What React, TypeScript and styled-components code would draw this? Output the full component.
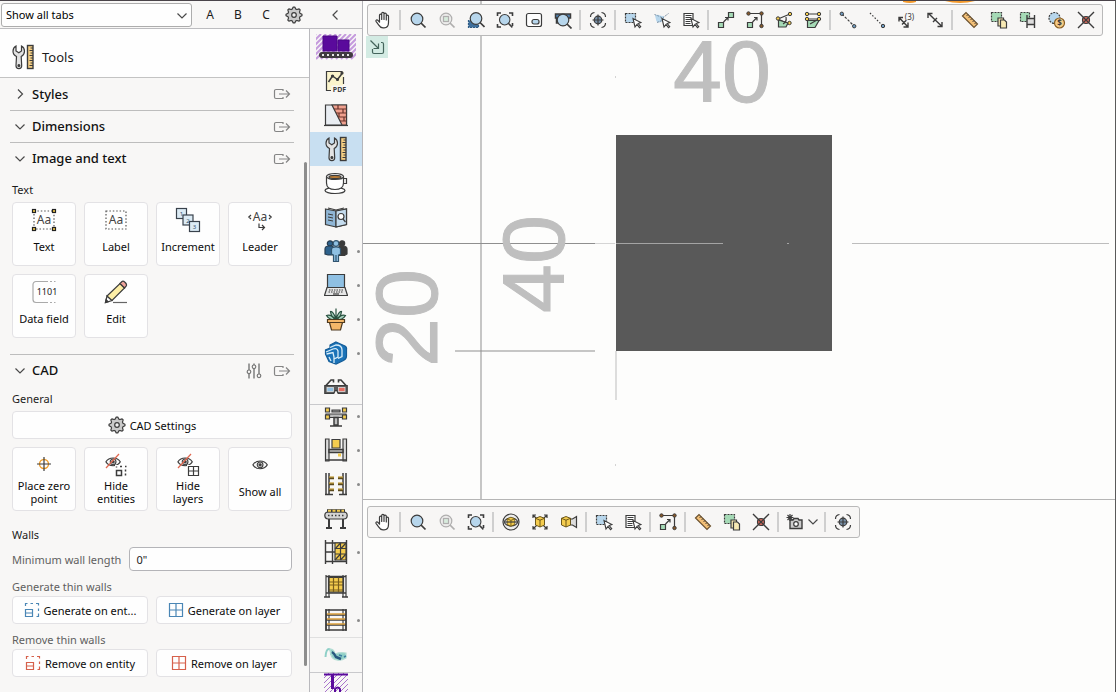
import React from "react";
import styled, { createGlobalStyle, css } from "styled-components";

const ink = "#3c3c3c";
const blue = "#b7d6ec";
const green = "#a5dab6";
const gold = "#f4cc4e";

const GlobalStyle = createGlobalStyle`
  *, *::before, *::after { box-sizing: border-box; }
  body {
    margin: 0;
    background: #fdfdfc;
    color: #1c1c1c;
    font-family: "Noto Sans", "Open Sans", sans-serif;
    font-size: 11px;
    line-height: 13px;
  }
  button, input, select { font: inherit; color: inherit; }
  h1, h2, h3, p { margin: 0; font: inherit; }
`;

/* ---------- layout ---------- */

const Shell = styled.div`
  display: flex;
  height: 100vh;
  overflow: hidden;
  border-top: 1px solid #4a444a;
  border-right: 1px solid #5a5a5a;
`;

const Sidebar = styled.aside`
  flex: none;
  display: flex;
  flex-direction: column;
  background: #f8f7f6;
  border-right: 1px solid #b5b5b9;
`;

const TopBar = styled.header`
  flex: none;
  display: flex;
  align-items: center;
  height: 28px;
  padding-left: 1px;
  border-bottom: 1px solid #bdbdc0;
`;

const TabSelect = styled.div`
  position: relative;
  width: 191px;
  margin-right: 4px;
  select {
    display: block;
    width: 100%;
    height: 24px;
    padding: 0 20px 0 4px;
    border: 1px solid #adadad;
    border-radius: 3px;
    background: #fefefe;
    color: #000;
    appearance: none;
  }
  svg {
    position: absolute;
    right: 4px;
    top: 7px;
    pointer-events: none;
  }
`;

const BarButton = styled.button`
  width: 28px;
  height: 24px;
  padding: 0;
  border: 0;
  background: none;
  font-size: 12px;
  display: grid;
  place-items: center;
`;

const CollapseButton = styled(BarButton)`
  flex: 1;
`;

const SideBody = styled.div`
  flex: 1;
  min-height: 0;
  display: flex;
`;

const Panel = styled.section`
  width: 310px;
  display: flex;
  flex-direction: column;
  border-right: 1px solid #b9b9bd;
`;

const PanelTitle = styled.h1`
  flex: none;
  display: flex;
  align-items: center;
  gap: 8px;
  height: 49px;
  padding: 8px 12px 0;
  font-size: 13px;
  background: #fefefe;
  border-bottom: 1px solid #c3c3c3;
`;

const PanelScroll = styled.div`
  flex: 1;
  min-height: 0;
  display: flex;
  overflow: hidden;
`;

const Sections = styled.div`
  flex: 1;
  min-width: 0;
  padding: 0 10px;
`;

const Thumb = styled.div`
  flex: none;
  width: 3px;
  height: 504px;
  margin: 84px 2px 0 0;
  border-radius: 2px;
  background: #8d8d8d;
`;

const SectionHead = styled.button`
  display: flex;
  align-items: center;
  gap: 6px;
  width: 100%;
  height: 31px;
  padding: 0 3px 0 4px;
  border: 0;
  background: none;
  color: #111;
  font-size: 13px;
  font-weight: 500;
  text-align: left;
  span { flex: 1; }
  svg + svg { margin-left: 4px; }
`;

const Section = styled.section`
  &:first-child ${SectionHead} { height: 32px; }
  & + & { border-top: 1px solid #bdbdbd; }
`;

const SectionBody = styled.div<{ $top: number; $end: number }>`
  padding: ${(p) => p.$top}px 2px ${(p) => p.$end}px;
`;

const GroupLabel = styled.h3`
  height: 19px;
`;

const Hint = styled.p`
  height: 16px;
  color: #5f5f5f;
`;

const Tiles = styled.div`
  display: grid;
  grid-template-columns: repeat(4, minmax(0, 1fr));
  gap: 8px;
`;

const plate = css`
  border: 1px solid #e3e2e5;
  border-radius: 4px;
  background: #fefefe;
  color: #0c0c0c;
  padding: 0;
  white-space: nowrap;
`;

const Tile = styled.button<{ $tall?: boolean }>`
  ${plate}
  height: 64px;
  display: flex;
  flex-direction: column;
  align-items: center;
  justify-content: ${(p) => (p.$tall ? "flex-end" : "flex-start")};
  padding: ${(p) => (p.$tall ? "0 0 5px" : "4px 0 0")};
  gap: ${(p) => (p.$tall ? "0" : "7px")};
  svg { flex: none; }
`;

const Wide = styled.button`
  ${plate}
  display: flex;
  align-items: center;
  justify-content: center;
  gap: 4px;
  width: 100%;
  height: 28px;
`;

const Pair = styled.div`
  display: grid;
  grid-template-columns: repeat(2, minmax(0, 1fr));
  gap: 8px;
  margin-bottom: 9px;
`;

const Stack = styled.div`
  display: grid;
  gap: 8px;
  margin-bottom: 17px;
`;

const Field = styled.label`
  display: flex;
  align-items: center;
  gap: 8px;
  margin-bottom: 9px;
  color: #5f5f5f;
  white-space: nowrap;
  input {
    flex: 1;
    min-width: 0;
    height: 24px;
    padding: 0 6px;
    color: #222;
    border: 1px solid #b4b4b8;
    border-radius: 4px;
    background: #fefefe;
  }
`;

/* ---------- rail ---------- */

const Rail = styled.nav`
  width: 52px;
  display: flex;
  flex-direction: column;
  padding-top: 1px;
`;

const RailGroup = styled.div<{ $scrolled?: boolean }>`
  flex: none;
  overflow: hidden;
  border-bottom: 1px solid #c9c9cc;
  ${(p) =>
    p.$scrolled &&
    css`
      border-bottom-color: #e0e0e0;
      > :first-child { margin-top: -6px; }
    `}
`;

const RailButton = styled.button<{ $active?: boolean }>`
  display: flex;
  align-items: center;
  justify-content: center;
  position: relative;
  width: 100%;
  height: 34px;
  padding: 0;
  border: 0;
  background: ${(p) => (p.$active ? "#c8dff1" : "none")};
`;

const More = styled.i`
  position: absolute;
  right: 2px;
  top: 16px;
  width: 3px;
  height: 3px;
  border-radius: 2px;
  background: #8a8a8a;
`;

/* ---------- viewer ---------- */

const Viewer = styled.main`
  flex: 1;
  min-width: 0;
  display: flex;
  flex-direction: column;
`;

const View = styled.section`
  flex: 1;
  min-height: 0;
  position: relative;
  overflow: hidden;
  display: flex;
  flex-direction: column;
  align-items: flex-start;
  padding: 6px 4px 0;
  &:first-child {
    flex: 0 0 72%;
    padding-top: 3px;
  }
  & + & { border-top: 1px solid #b5b5b5; }
`;

const Canvas = styled.svg`
  position: absolute;
  left: 0;
  top: 0;
  width: 100%;
  height: 100%;
`;

const Toolbar = styled.div`
  position: relative;
  flex: none;
  display: flex;
  align-items: center;
  height: 32px;
  padding-right: 2px;
  border: 1px solid #b9b9b9;
  border-radius: 3px;
  background: #f7f6f5;
`;

const ToolButton = styled.button<{ $wide?: boolean }>`
  width: ${(p) => (p.$wide ? 41 : 29)}px;
  height: 28px;
  padding: 0;
  border: 0;
  background: none;
  display: flex;
  gap: 4px;
  align-items: center;
  justify-content: center;
`;

const Divider = styled.span`
  width: 2px;
  height: 20px;
  margin: 0 2px;
  background: #cfcfcf;
`;

const InsertButton = styled.button`
  position: relative;
  width: 22px;
  height: 22px;
  margin-left: -1px;
  padding: 0;
  border: 0;
  background: #d3ebe3;
  display: grid;
  place-items: center;
`;

/* ---------- icons ---------- */

type Art = React.ReactNode;

const Svg = ({ w = 18, h = w, children }: { w?: number; h?: number; children: Art }) => (
  <svg width={w} height={h} viewBox={`0 0 ${w} ${h}`} fill="none" stroke={ink} strokeWidth="1.2" aria-hidden="true">
    {children}
  </svg>
);

const gearTeeth = Array.from({ length: 32 }, (_, i) => {
  const a = ((i - 0.5) * Math.PI) / 16;
  const r = i % 4 < 2 ? 8 : 6.2;
  return `${(9 + r * Math.cos(a)).toFixed(2)},${(9 + r * Math.sin(a)).toFixed(2)}`;
}).join(" ");

const Gear = () => (
  <Svg>
    <polygon points={gearTeeth} fill="#c9c9c9" strokeLinejoin="round" />
    <circle cx="9" cy="9" r="2.3" fill="#efefef" />
  </Svg>
);

const Chevron = ({ dir }: { dir: "down" | "right" | "left" }) => (
  <Svg w={12}>
    <path
      stroke="#4a4a4a"
      d={dir === "down" ? "M1.5 3.5 6 8l4.5-4.5" : dir === "right" ? "M4 1.5 8.5 6 4 10.5" : "M8.5 1.5 4 6l4.5 4.5"}
    />
  </Svg>
);

const PopOut = () => (
  <Svg w={18} h={12}>
    <g stroke="#858585">
      <path d="M10 3V1.5H3A1.5 1.5 0 0 0 1.500 3v6A1.5 1.5 0 0 0 3 10.5h7V9" />
      <path d="M6 6h10.500M13 2.500 16.500 6 13 9.500" />
    </g>
  </Svg>
);

const Sliders = () => (
  <Svg w={18}>
    <g stroke="#777">
      <path d="M4 1.500V8M4 11.500v5M9 1.500V3M9 6.500v10M14 1.500V12" strokeWidth="1.400" />
      <circle cx="4" cy="9.800" r="1.800" />
      <circle cx="9" cy="4.800" r="1.800" />
      <circle cx="14" cy="13.800" r="1.800" />
    </g>
  </Svg>
);

const WrenchRuler = () => (
  <Svg w={22} h={26}>
    <path
      fill="#e3e3e3"
      d="M4.500 12.500C2.500 11.500 1 9.500 1 7.200 1 5 2.200 3 4 2v5l2.800 1.800L9.500 7V2c1.800 1 3 3 3 5.200 0 2.300-1.500 4.300-3.300 5.300l.5 9.200a2.800 2.800 0 0 1-5.700 0z"
    />
    <circle cx="6.900" cy="21.500" r=".9" fill={ink} />
    <rect x="15.500" y="1.500" width="5.500" height="23" fill="#f6cf83" strokeWidth="1.400" />
    <path d="M18.500 4H21M17.500 6.500H21M18.500 9H21M17.500 11.500H21M18.500 14H21M17.500 16.500H21M18.500 19H21M17.500 21.500H21" strokeWidth="1" />
  </Svg>
);

const AaBox = ({ handles }: { handles?: boolean }) => (
  <Svg w={26}>
    <rect x="3" y="4" width="20" height="18" strokeDasharray="1.500 1.900" stroke="#555" />
    <text x="13" y="17" textAnchor="middle" fontSize="12" fill="#444" stroke="none">Aa</text>
    {handles &&
      [[1.5, 2.5], [21.5, 2.5], [1.5, 20.5], [21.5, 20.5]].map(([x, y]) => (
        <rect key={`${x}-${y}`} x={x} y={y} width="3" height="3" fill={gold} stroke="#222" />
      ))}
  </Svg>
);

const Increment = () => (
  <Svg w={26}>
    {[0, 1, 2].map((i) => (
      <g key={i}>
        <rect x={1.5 + i * 6.5} y={1.5 + i * 6.5} width="10" height="10" fill="#dcebf5" stroke="#39424c" />
        <text x={6.5 + i * 6.5} y={9 + i * 6.5} textAnchor="middle" fontSize="6" fill="#33506d" stroke="none">{i + 1}</text>
      </g>
    ))}
  </Svg>
);

const Leader = () => (
  <Svg w={26}>
    <text x="13" y="14" textAnchor="middle" fontSize="12" fill="#444" stroke="none">Aa</text>
    <path d="M4 8 1.800 10 4 12M22 8 24.200 10 22 12" />
    <path d="M12 16.500v4h5M15 18l2.500 2.500L15 23" />
  </Svg>
);

const DataField = () => (
  <Svg w={28} h={26}>
    <path stroke="#aaa" d="M18 2.500H6a3 3 0 0 0-3 3v15a3 3 0 0 0 3 3h12M20 2.500h2M24 2.500h1.500M20 23.500h2M24 23.500h1.500" />
    <text x="17" y="16" textAnchor="middle" fontSize="9" fill="#222" stroke="none">1101</text>
  </Svg>
);

const Pencil = () => (
  <Svg w={26}>
    <path d="M10 23.500h14" stroke="#666" />
    <path d="M2.500 23.500 4 17 9 21.500z" fill="#fff" />
    <path d="M4 17 17 4.500 21.500 9 9 21.500z" fill="#fdeea6" />
    <path d="m17 4.500 2-2c1.500-1.200 5.500 2.500 4.300 4.300L21.500 9z" fill="#f0a39a" />
    <path d="m2.500 23.500.6-2.800 2 2z" fill={ink} />
  </Svg>
);

const EyeShape = () => (
  <>
    <path d="M1 6.500C4.500.8 13.500.8 17 6.500 13.500 12.200 4.500 12.200 1 6.500z" fill="#fafafa" />
    <circle cx="9" cy="6.500" r="3.200" fill="#ddd" />
    <circle cx="9" cy="6.500" r="1.200" fill={ink} />
  </>
);

const Eye = () => (
  <Svg w={26}>
    <g transform="translate(5 7) scale(.9)"><EyeShape /></g>
  </Svg>
);

const HiddenEye = ({ dashed }: { dashed?: boolean }) => (
  <Svg w={26}>
    <g transform="translate(2 3) scale(.9)"><EyeShape /></g>
    <rect x="12" y="12" width="12" height="12" fill="#fefefe" stroke="none" />
    {dashed ? (
      <path d="M13.500 17.500h5v5h-5zM13.500 13.500v1M17 13.500h2M22 13.500h1.500M22.500 16.500v2M22.500 20.500v2" strokeWidth="1.500" />
    ) : (
      <path d="M13.500 13.500h10v9h-10zM18.500 13.500v9M13.500 18h10" />
    )}
    <path d="M3 15 16 1" stroke="#e0674f" />
  </Svg>
);

const ZeroPoint = () => (
  <Svg w={18} h={26}>
    <circle cx="9" cy="11" r="4.500" stroke="#f0a030" strokeWidth="1.400" />
    <path d="M2 11h14M9 4v14" />
  </Svg>
);

const WallGrid = ({ color, dashed }: { color: string; dashed?: boolean }) => (
  <Svg w={16}>
    <g stroke={color}>
      {dashed ? (
        <path d="M1.500 7.500h7v7h-7zM1.500 11h7M1.500 4v-2.500h2M6.500 1.500h2.500M12 1.500h2.500v2M14.500 6.500v2.500M14.500 11.500v3h-2" />
      ) : (
        <path d="M1.500 1.500h13v13h-13zM8 1.500v13M1.500 8h13" />
      )}
    </g>
  </Svg>
);

const cursor = <path d="m9 7.500 2 8.500 2-2.500 2.500 3.200 1.200-1-2.500-3.200 2.800-1z" fill="#fff" strokeWidth="1.100" />;
const lens = (fill = blue) => (
  <>
    <circle cx="8" cy="8" r="5.800" fill={fill} />
    <path d="m12 12 4.500 4.500" strokeWidth="1.700" />
  </>
);
const corners = <path d="M1.500 5V2H5M13 2h3.500V5M1.500 13v3H5M16.500 12v3" strokeWidth="1.600" />;
const node = (x: number, y: number, fill = gold) => <circle cx={x} cy={y} r="1.700" fill={fill} strokeWidth="1" />;
const cube = (
  <g strokeWidth=".9" stroke="#5d4a10">
    <path d="m9 3.500 4.500 1.800v6.700L9 14l-4.500-2V5.300z" fill={gold} />
    <path d="M4.500 5.300 9 7.200l4.500-1.900M9 7.200V14" />
  </g>
);

const tools: Record<string, Art> = {
  Pan: (
    <path
      fill="#fff"
      strokeLinejoin="round"
      d="M5.500 11.200V4.300a1.100 1.100 0 0 1 2.200 0V8.500 2.500a1.100 1.100 0 0 1 2.300 0V8.500 3.300a1.100 1.100 0 0 1 2.300 0V9 5.200a1.100 1.100 0 0 1 2.200 0v6.300c0 3.200-1.600 5.300-4.400 5.300H9c-2 0-3.200-1-4.200-2.700L2 10.300c-.6-1.200 1-2 1.900-1z"
    />
  ),
  Zoom: lens(),
  "Zoom selection": <g opacity=".38">{lens("#ddd")}<rect x="5.500" y="5.500" width="5" height="5" fill={green} /></g>,
  "Zoom area": <><path d="M1.500 9v7.500h10v-3" fill="#3e6f9c" stroke="#2d5a84" strokeDasharray="2 1" /><g transform="translate(1 -.5)">{lens()}</g></>,
  "Zoom all": <>{corners}<g transform="translate(1.500 1.500) scale(.9)">{lens()}</g></>,
  "Overview map": <><rect x="1.500" y="2.500" width="15" height="13" rx="2" fill="#fff" /><rect x="7" y="8.500" width="7" height="4.500" rx="2" fill={blue} /></>,
  "Zoom window": <><path d="M1.500 3h15v4h-15zM2.500 7v5h3" fill="#4d7fae" strokeWidth="1.500" /><g transform="translate(1 1)">{lens()}</g></>,
  Center: <>
    <path d="M1.500 6q0-4 4-4.500M12.500 1.500q4 .5 4 4.500M1.500 12q0 4 4 4.500M12.500 16.500q4-.5 4-4.500" />
    <circle cx="9" cy="9" r="3.800" fill="#7890a8" /><path d="M9 3.500v11M3.500 9h11" />
  </>,
  Select: <><rect x="1.500" y="2.500" width="10" height="9" fill={blue} strokeDasharray="2 1" />{cursor}</>,
  "Select free": <>
    <path d="M2 4.500q3-1.500 5 0l4 1v4L7 11.500q-4 0-4-3z" fill={blue} stroke="none" />
    <path d="m1.500 3.500 4 1.500 4 2 6-4.500M4 11.500l5-2" strokeWidth=".9" stroke="#6f8598" strokeDasharray="2 1" />{cursor}
  </>,
  "Select list": <><path d="M2 2.500h9v12H2z" fill="#fff" /><path d="M3.500 4.500h6M3.500 6.500h6M3.500 8.500h6M3.500 10.500h5M3.500 12.500h5" strokeWidth="1.100" />{cursor}</>,
  "Move diagonal": <><path d="M1.500 11.500h5v5h-5zM11.500 1.500h5v5h-5z" fill={green} /><path d="m6.500 11 4-4M8 6.500h3v3" /></>,
  "Move corner": <>
    <path d="M1.500 11.500h5v5h-5z" fill={green} /><path d="m6.500 11 4-4M8 6.500h3v3M3 2.500h12.500V15" />
    {node(2.5, 2.5, "#8a5a2a")}{node(15.5, 2.5, "#8a5a2a")}{node(15.5, 15, "#8a5a2a")}
  </>,
  "Rotate shape": <>
    <path d="m3 8 12-5M3 8l11 5" /><path d="M3.500 9v7H11l2-4z" fill={green} /><path d="M8 13q4-2 3-7" />
    {node(3, 7.5)}{node(15, 3)}{node(14.5, 12)}
  </>,
  "Stretch shape": <>
    <path d="M3 3h12M3 8h12" /><path d="M3.500 9.500v7H11l4-7z" fill={green} /><path d="m6 13 7-4" />
    {node(3, 3)}{node(15, 3)}{node(3, 8)}{node(15, 8)}
  </>,
  "Line start": <><path d="m3 3 12 12" strokeDasharray="2.500 1.500" />{node(2.8, 2.8, "#6f9cc2")}{node(15.2, 15.2, "#6f9cc2")}</>,
  "Line end": <><path d="m2 2 13 13" strokeDasharray="1.500 1.800" />{node(15, 15, "#6f9cc2")}</>,
  "Dimension chain": <>
    <path d="m2.500 7 8 8.500M2 10.500V6.500h4M11 11.500V16H6.500M5 13.500l4-4" strokeWidth="1.400" />
    <text x="12.500" y="8.500" textAnchor="middle" fontSize="8" fill={ink} stroke="none">(3)</text>
  </>,
  Dimension: <path d="m2.500 2.500 13.500 13M2 7V2.500h4.500M16 11v4.500h-4.500M7 11l4-4" strokeWidth="1.400" />,
  Measure: <><path d="m1.500 5 3.500-3.500L16.500 13 13 16.500z" fill="#f3bf76" stroke="#6c5230" /><path d="m7 3.500-1.500 1.500M9 5.500 7.500 7M11 7.500 9.500 9M13 9.500 11.500 11M15 11.500 13.500 13" strokeWidth=".9" /></>,
  "Copy selection": <><path d="M1.500 1.500h10v9h-10z" fill={green} strokeDasharray="2 1" /><path d="M8 7h5.500v8H8z" fill="#f7e9b4" /><path d="M10.500 9h4l2 2v6h-6z" fill="#f7e9b4" /></>,
  "Save selection": <><path d="M1.500 1.500h9v9h-9z" fill={green} strokeDasharray="2 1" /><path d="M8 4v13M15.500 4v13M8 7.500h7.500v6H8z" fill="#ddd" strokeWidth="1.400" /></>,
  Price: <><circle cx="6.500" cy="7" r="5.500" fill={blue} strokeDasharray="2 1" /><circle cx="11.500" cy="12" r="5" fill="#f6cd88" stroke="#8a5e22" /><text x="11.500" y="15" textAnchor="middle" fontSize="8" fontWeight="700" fill={ink} stroke="none">$</text></>,
  "Delete point": <><path d="m1 1 16 16M17 1 1 17" strokeWidth="1.400" /><circle cx="9" cy="9" r="3.500" fill="#d86a5c" /><path d="m6.500 6.500 5 5M11.500 6.500l-5 5" /></>,
  Orbit: <><circle cx="9" cy="9" r="8" fill="#eee" /><ellipse cx="9" cy="9" rx="6.500" ry="4" fill="#fff" /><g transform="translate(1.200 1.200) scale(.86)">{cube}</g><path d="M3 9h12" /></>,
  "Fit model": <><path d="M2 5V2h3M13 2h3v3M2 13v3h3M16 13v3h-3M2 2l3.500 3.500M16 2l-3.500 3.500M2 16l3.500-3.500M16 16l-3.500-3.500" />{cube}</>,
  "Camera view": <><path d="M10 6h2.500L16.500 3.500v11l-4-2.500H10z" fill="#ddd" /><g transform="translate(-3 0)">{cube}</g></>,
};

const CameraIcon = () => (
  <Svg w={18}>
    <path d="M5 7h3l1-1.500h4L14 7h3v8.500H5z" fill="#ccc" strokeWidth="1.400" />
    <circle cx="11" cy="11" r="2.300" fill="#fff" />
    <path d="M5 1v7M1.500 4.500h7M2.500 2l5 5M7.500 2l-5 5" strokeWidth="1.200" />
  </Svg>
);

const shelfUprights = <path d="M2 1v22M5 1v22M19 1v22M22 1v22" strokeWidth="1.200" />;

const rail: Record<string, Art> = {
  PDF: <>
    <path d="M2.500 2.500h17v14h-12v5h-5z" fill="#fbf4cc" stroke="none" /><path d="M7 21.500H2.500v-19h16M19.500 8v7" />
    <path d="m4.500 13 4-6 5 3.500 5-6.500" strokeWidth="1.500" />
    <g fill={ink}><circle cx="8.500" cy="7" r="1" /><circle cx="13.500" cy="10.500" r="1" /><circle cx="18" cy="4" r="1" /></g>
    <text x="15.500" y="22.500" textAnchor="middle" fontSize="7" fontWeight="700" fill={ink} stroke="none">PDF</text>
  </>,
  Walls: <>
    <path d="M1.500 2h21v20h-21z" fill="#e9edf2" /><path d="M8 2h14.500v20H18z" fill="#f0a08e" />
    <path d="M10 6h12.500M12 10h10.500M14 14h8.500M16 18h6.500M14 2v4M19 6v4M15 10v4M20 14v4" stroke="#6b322a" /><path d="M0 22.500h24" />
  </>,
  Catering: <>
    <ellipse cx="11" cy="19.500" rx="10" ry="3" fill="#fff" /><path d="M2.500 5.500v6.500c0 4 3 6.500 8.500 6.500s8.500-2.500 8.500-6.500V5.500" fill="#fff" />
    <path d="M19.500 7.500h3v5h-3" /><ellipse cx="11" cy="5.500" rx="8.500" ry="3" fill="#fff" /><ellipse cx="11" cy="6" rx="6" ry="1.600" fill="#b77a35" />
  </>,
  Catalog: <>
    <path d="M1.500 4 12 6l10.500-2v15.500L12 22 1.500 19.500z" fill="#8fb6d6" /><path d="M12 6v16M4 3l8 2 8-2" /><path d="M4 9l5 1M4 12l5 1M4 15l5 1" strokeWidth="1" />
    <path d="M12 6l10.500-2v15.500L12 22z" fill="#c5dcee" /><circle cx="17" cy="11.500" r="3" fill="#fff" /><path d="m19 14 2.500 3" />
  </>,
  People: <>
    <g fill="#2e628c" stroke="#263c50"><circle cx="6" cy="4.500" r="2.700" /><path d="M1 15V10q0-3 4-3h4v9h-5z" /></g>
    <g fill="#3a3a3a"><circle cx="18" cy="4.500" r="2.700" /><path d="M15 7h4q4 0 4 3v5l-2.500 1.500H15z" /></g>
    <g fill="#8fc0e3" stroke="#31546f"><circle cx="12" cy="4.500" r="2.800" /><path d="M7.500 15v-4.500q0-2.500 4.500-2.500t4.500 2.500V15l-2 1v6.500h-5V16z" /><path d="M12 16v6" /></g>
  </>,
  Computer: <>
    <path d="M3.500 1.500h17v13h-17z" fill="#8fc0e3" /><path d="M3 14.500h18l2.500 8H.5z" fill="#e6e6e6" /><path d="M5 17h14M4.500 19h15" strokeDasharray="1.500 1" /><path d="M9 21h6" />
  </>,
  Plants: <>
    <path d="M12 13V1.500M12 12Q9 4 6.500 4.500 7 10 12 13 17 10 17.500 4.500 15 4 12 12M12 13Q7 7 2.500 8.500 5 13 12 13 19 13 21.500 8.500 17 7 12 13" fill="#a9d3c0" stroke="#28503f" />
    <path d="M3.500 12.500h17v3h-17zM5.500 15.500h13l-2 7.500h-9z" fill="#f3b769" stroke="#4f3a20" />
  </>,
  "3D models": <>
    <path d="M12 1 21 5q2 1 1.500 4v6q0 3-3 4.500L12 23l-7-2.500L1.500 13V9L6 7V4z" fill="#1b73b8" stroke="#145c97" />
    <path d="M2 11l7-3q4-1.500 5 2v6l-4 2M6 6.500l6-2.500q6 0 6 5v6.500L14 17.500M2.500 13 9 11.500 10 16v6M5 16l2 4" stroke="#d9edf8" strokeWidth="1.300" />
  </>,
  "3D glasses": <>
    <path d="M.8 10.500h22.400v8h-9l-1.500-3h-1.400l-1.500 3h-9z" fill="#5b5b5b" /><rect x="3" y="12.500" width="6.500" height="4" fill="#8fc0e3" stroke="#ddd" strokeWidth=".8" />
    <rect x="14.500" y="12.500" width="6.500" height="4" fill="#e86c60" stroke="#ddd" strokeWidth=".8" /><path d="M2 10.500 7 5h2.500v2.500M22 10.500 17 5h-2.500v2.500" strokeWidth="1.600" />
  </>,
  Workbench: <>
    <path d="M2 10h20v3.500H2z" fill="#bdbdbd" /><path d="M10 13.500h4V21h-4zM6 22h12" fill="#bdbdbd" strokeWidth="1.500" /><path d="M8 6h8v2H8z" fill="#999" />
    <g fill={gold}><path d="M1.500 4h4v4h-4zM18.500 4h4v4h-4zM1.500 11h4v4h-4zM18.500 11h4v4h-4z" /></g>
  </>,
  Racking: <>
    <path d="M1.500 1h3.500v22H1.500zM19 1h3.500v22H19z" fill="#ddd" /><path d="M5 11.500h14v3H5zM2 22h20" fill="#bbb" strokeWidth="1.500" /><path d="M8 1.500h8v8.500H8z" fill={gold} /><path d="M14 15.500h3v3h-3z" fill={gold} stroke="none" />
  </>,
  Cantilever: <>
    <path d="M2 1v21M5 1v21M19 1v21M22 1v21M1 22.500h8M15 22.500h8" strokeWidth="1.500" /><g stroke="#5b4a1d" strokeWidth="2.500"><path d="M5 6h5M5 12h5M5 18h5M14 6h5M14 12h5M14 18h5" /></g>
    <g stroke="#e0b64d"><path d="M5 5h5M5 11h5M5 17h5M14 5h5M14 11h5M14 17h5" /></g>
  </>,
  Conveyor: <>
    <path d="M5 12v10M19 12v10M2 22h6M16 22h6" strokeWidth="2" /><rect x=".8" y="6" width="22.400" height="7" rx="3.500" fill="#d5d5d5" /><path d="M4 9.500h16" strokeDasharray="1.500 2" strokeWidth="1.600" />
    <path d="M3 4.800h18" strokeWidth="3.200" /><path d="M4 4.800h16" stroke={gold} strokeDasharray="3 1.500" strokeWidth="2" />
  </>,
  "Pallet rack": <>
    <path d="M1.500 0v24M8.500 0v24M22.500 0v24M1.500 3h21M1.500 12h21M1.500 21.500h21" strokeWidth="1.400" /><path d="M11 3h11v17H11z" fill={gold} /><path d="M16.500 3v17M11 8.500h11M11 14h11M11 9l5.500-6M16.500 9 22 3M11 20l5.500-6M16.500 20l5.500-6" />
  </>,
  "Storage rack": <>
    <path d="M4.500 3.500h15V18h-15z" fill={gold} /><path d="M9.500 3.500V18M14.500 3.500V18M4.500 8h15M4.500 11h15M4.500 16h15" stroke="#7a5e1c" />{shelfUprights}<path d="M2 2.500h20M2 19h20M0 23h6M18 23h6" strokeWidth="1.500" />
  </>,
  Shelving: <>
    {shelfUprights}<path d="M2 2h20v20H2zM2 7h20M2 12h20M2 17h20" strokeWidth="1.500" /><path d="M3 6h18M3 11h18M3 16h18" stroke="#dda13e" strokeWidth="1.300" />
  </>,
  "Flow simulation": <>
    <path d="M1.500 14Q2 6 5 6q2 0 2 6" stroke="#8fd0c8" strokeWidth="2" /><path d="M6 6q4 0 5 5 5-2 11-1v5q-5 3-9 2-5-1-6-5z" fill="#8fcfc6" stroke="#b5ddd4" />
    <path d="M8 9q2 1 4 5l5 2" stroke="#28587f" strokeWidth="2.500" /><path d="m15 12 3 1M20 14l2-1" stroke="#3f7ea3" strokeWidth="1.500" />
  </>,
};

const hatch = (w: number, h: number) => {
  let d = "";
  for (let x = -h; x < w; x += 5) d += `M${x} ${h}L${x + h} 0`;
  return d;
};

const LoadUnits = () => (
  <Svg w={40} h={26}>
    <path d={hatch(40, 25)} stroke="#c59bdd" strokeWidth="2" />
    <path d="M7 2h14v15H7zM22 6h11v11H22z" fill="#5a0a9c" stroke="#4b0786" strokeWidth="1" />
    <rect x="3" y="18" width="34" height="6" rx="3" fill="#403a40" stroke="none" />
    <path d="M6 21h29" stroke="#e5e5e5" strokeWidth="2" strokeDasharray="2 3" />
  </Svg>
);

const BeamUnits = () => (
  <Svg w={24} h={26}>
    <path d={hatch(24, 26)} stroke="#a873cc" strokeWidth="1" />
    <path d="M0 1.500h24" stroke="#5a0a9c" strokeWidth="2" />
    <path d="M8.500 2v14" stroke="#5a0a9c" strokeWidth="3" />
    <path d="M11 22v-6q3-3 5 0v6" stroke="#5a0a9c" strokeWidth="2" />
  </Svg>
);

const InsertIcon = () => (
  <Svg w={16}>
    <g stroke="#44645b"><path d="M1.500 1.500 9.500 9.500M9.500 4.500v5h-5M12 3.500h1A1.500 1.500 0 0 1 14.500 5v8a1.500 1.500 0 0 1-1.500 1.500H5A1.500 1.500 0 0 1 3.500 13v-3" /></g>
  </Svg>
);

/* ---------- content ---------- */

const topTools = [
  ["Pan"],
  ["Zoom", "Zoom selection", "Zoom area", "Zoom all", "Overview map", "Zoom window"],
  ["Center"],
  ["Select", "Select free", "Select list"],
  ["Move diagonal", "Move corner", "Rotate shape", "Stretch shape"],
  ["Line start", "Line end", "Dimension chain", "Dimension"],
  ["Measure", "Copy selection", "Save selection", "Price", "Delete point"],
];

const bottomTools = [
  ["Pan"],
  ["Zoom", "Zoom selection", "Zoom all"],
  ["Orbit", "Fit model", "Camera view"],
  ["Select", "Select list"],
  ["Move corner"],
  ["Measure", "Copy selection", "Delete point"],
  ["Camera"],
  ["Center"],
];

const mainRail = ["PDF", "Walls", "Tools", "Catering", "Catalog", "People", "Computer", "Plants", "3D models", "3D glasses"];
const storageRail = ["Workbench", "Racking", "Cantilever", "Conveyor", "Pallet rack", "Storage rack", "Shelving"];
const withMore = new Set(["People", "Computer", "Plants", "3D models", "Workbench", "Racking", "Cantilever", "Pallet rack", "Shelving"]);

const ToolGroups = ({ groups }: { groups: string[][] }) => (
  <Toolbar role="toolbar">
    {groups.map((names, i) => (
      <React.Fragment key={names[0]}>
        {i > 0 && <Divider />}
        {names.map((name) => (
          <ToolButton key={name} aria-label={name} $wide={name === "Camera"}>
            {name === "Camera" ? <><CameraIcon /><Chevron dir="down" /></> : <Svg>{tools[name]}</Svg>}
          </ToolButton>
        ))}
      </React.Fragment>
    ))}
  </Toolbar>
);

const RailItem = ({ name }: { name: string }) => (
  <RailButton aria-label={name} $active={name === "Tools"}>
    {name === "Tools" ? <WrenchRuler /> : <Svg w={24}>{rail[name]}</Svg>}
    {withMore.has(name) && <More />}
  </RailButton>
);

const Head = ({ title, open, adjustable }: { title: string; open?: boolean; adjustable?: boolean }) => (
  <h2>
    <SectionHead aria-expanded={!!open}>
      <Chevron dir={open ? "down" : "right"} />
      <span>{title}</span>
      {adjustable && <Sliders />}
      <PopOut />
    </SectionHead>
  </h2>
);

const Plan = () => (
  <Canvas aria-label="Floor plan">
    <g fill="#f59a2c">
      <path d="M540 0h13v1q-6 2-13 0z" />
      <path d="M582 0h30q-15 4-30 0z" />
    </g>
    <path d="M118 0v498M0 242.500h232M92 350h140" stroke="#8f8f8f" fill="none" />
    <path d="M489 242.500h257M253 350v49" stroke="#bdbdbd" fill="none" />
    <path d="M232 242.500h20" stroke="#d5d5d5" fill="none" />
    <rect x="253" y="134" width="216" height="216" fill="#595959" />
    <path d="M253 242.500h107M424 242.500h2" stroke="#a4a4a4" fill="none" />
    <path d="M252 76h1M252 464h1" stroke="#aaa" fill="none" />
    <g fill="#bfbfbf" stroke="#bfbfbf" fontFamily='"Liberation Sans", Arial, sans-serif' fontSize="88">
      <text x="310" y="101">40</text>
      <text transform="translate(201 312) rotate(-90)">40</text>
      <text transform="translate(74 366) rotate(-90)">20</text>
    </g>
  </Canvas>
);

export default function App() {
  return (
    <>
      <GlobalStyle />
      <Shell>
        <Sidebar>
          <TopBar>
            <TabSelect>
              <select aria-label="Visible tabs" defaultValue="all">
                <option value="all">Show all tabs</option>
              </select>
              <Chevron dir="down" />
            </TabSelect>
            <BarButton>A</BarButton>
            <BarButton>B</BarButton>
            <BarButton>C</BarButton>
            <BarButton aria-label="Settings"><Gear /></BarButton>
            <CollapseButton aria-label="Collapse"><Chevron dir="left" /></CollapseButton>
          </TopBar>
          <SideBody>
            <Panel>
              <PanelTitle><WrenchRuler />Tools</PanelTitle>
              <PanelScroll>
                <Sections>
                  <Section><Head title="Styles" /></Section>
                  <Section><Head title="Dimensions" open /></Section>
                  <Section>
                    <Head title="Image and text" open />
                    <SectionBody $top={9} $end={16}>
                      <GroupLabel>Text</GroupLabel>
                      <Tiles>
                        <Tile><AaBox handles />Text</Tile>
                        <Tile><AaBox />Label</Tile>
                        <Tile><Increment />Increment</Tile>
                        <Tile><Leader />Leader</Tile>
                        <Tile><DataField />Data field</Tile>
                        <Tile><Pencil />Edit</Tile>
                      </Tiles>
                    </SectionBody>
                  </Section>
                  <Section>
                    <Head title="CAD" open adjustable />
                    <SectionBody $top={6} $end={0}>
                      <GroupLabel>General</GroupLabel>
                      <Stack>
                        <Wide><Gear />CAD Settings</Wide>
                        <Tiles>
                          <Tile $tall><ZeroPoint /><span>Place zero<br />point</span></Tile>
                          <Tile $tall><HiddenEye dashed /><span>Hide<br />entities</span></Tile>
                          <Tile $tall><HiddenEye /><span>Hide<br />layers</span></Tile>
                          <Tile><Eye />Show all</Tile>
                        </Tiles>
                      </Stack>
                      <GroupLabel>Walls</GroupLabel>
                      <Field>Minimum wall length<input defaultValue={'0"'} /></Field>
                      <Hint>Generate thin walls</Hint>
                      <Pair>
                        <Wide><WallGrid color="#4a86b5" dashed />Generate on ent...</Wide>
                        <Wide><WallGrid color="#4a86b5" />Generate on layer</Wide>
                      </Pair>
                      <Hint>Remove thin walls</Hint>
                      <Pair>
                        <Wide><WallGrid color="#d6604b" dashed />Remove on entity</Wide>
                        <Wide><WallGrid color="#d6604b" />Remove on layer</Wide>
                      </Pair>
                    </SectionBody>
                  </Section>
                </Sections>
                <Thumb />
              </PanelScroll>
            </Panel>
            <Rail>
              <RailGroup>
                <RailButton aria-label="Load units"><LoadUnits /></RailButton>
                {mainRail.map((n) => <RailItem key={n} name={n} />)}
              </RailGroup>
              <RailGroup $scrolled>
                {storageRail.map((n) => <RailItem key={n} name={n} />)}
              </RailGroup>
              <RailGroup><RailItem name="Flow simulation" /></RailGroup>
              <RailButton aria-label="Beam units"><BeamUnits /></RailButton>
            </Rail>
          </SideBody>
        </Sidebar>
        <Viewer>
          <View>
            <Plan />
            <ToolGroups groups={topTools} />
            <InsertButton aria-label="Insert"><InsertIcon /></InsertButton>
          </View>
          <View>
            <ToolGroups groups={bottomTools} />
          </View>
        </Viewer>
      </Shell>
    </>
  );
}
